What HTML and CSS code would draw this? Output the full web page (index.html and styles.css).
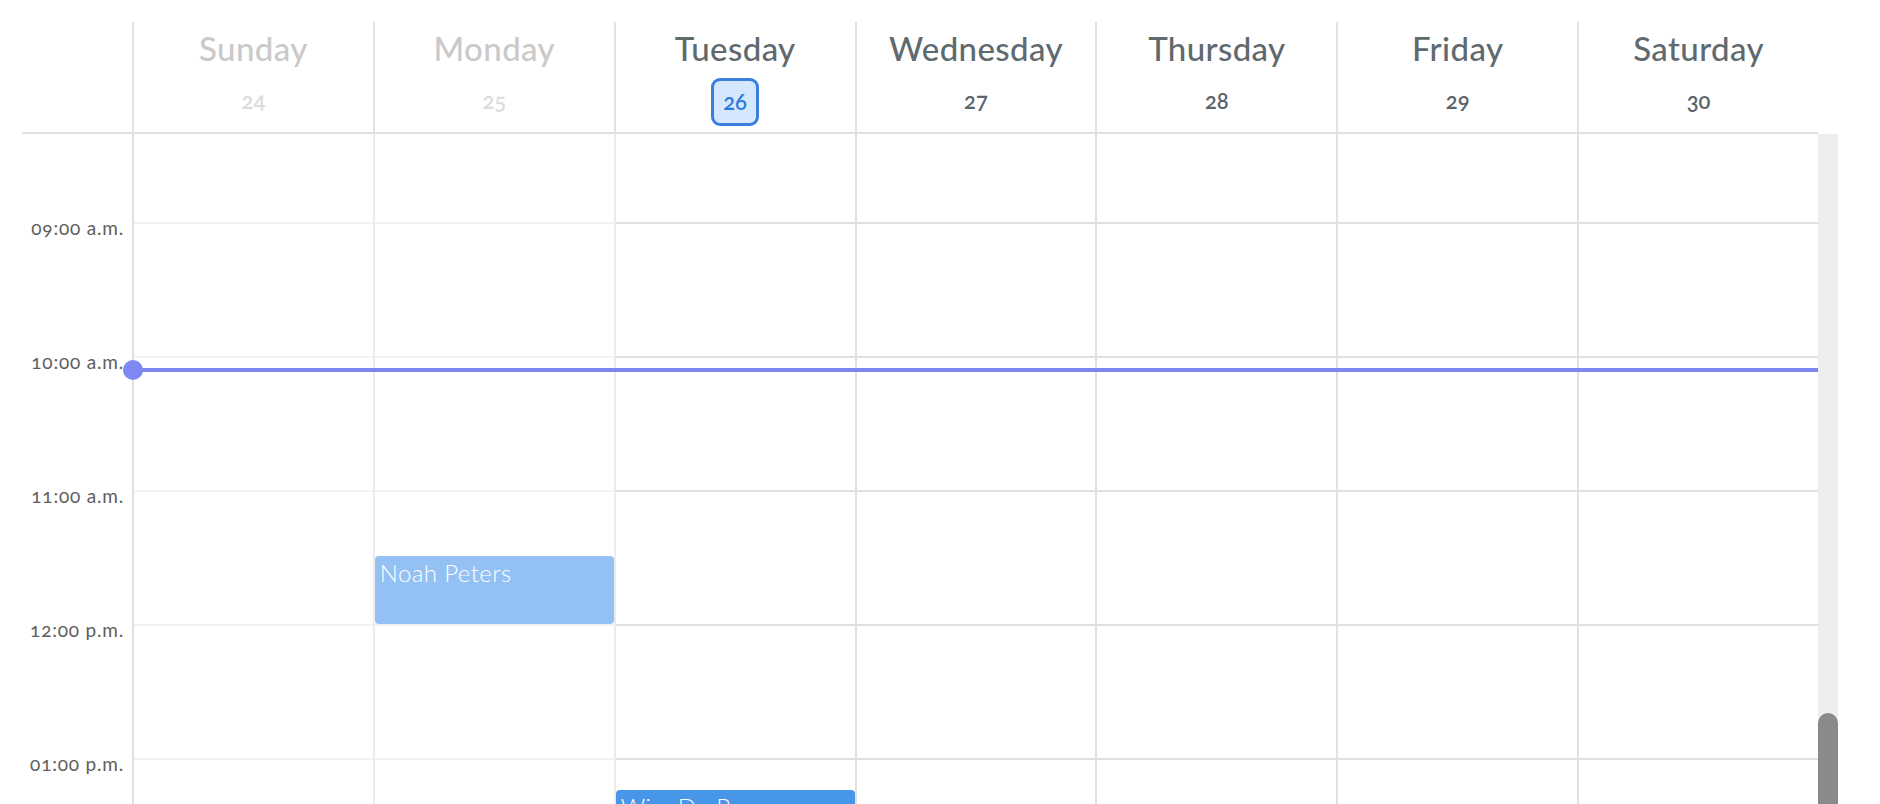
FILE: index.html
```html
<!DOCTYPE html>
<html lang="en">
<head>
    <meta charset="UTF-8">
    <meta name="viewport" content="width=device-width, initial-scale=1.0">
    <title>Week view</title>
    <link rel="stylesheet" href="styles.css">
</head>
<body>
    <div class="calendar">
        <div class="cal-head">
            <div class="corner"></div>
            <div class="day-head past"><div class="day-name">Sunday</div><div class="day-num">24</div></div>
            <div class="day-head past"><div class="day-name">Monday</div><div class="day-num">25</div></div>
            <div class="day-head today"><div class="day-name">Tuesday</div><div class="day-num">26</div></div>
            <div class="day-head"><div class="day-name">Wednesday</div><div class="day-num">27</div></div>
            <div class="day-head"><div class="day-name">Thursday</div><div class="day-num">28</div></div>
            <div class="day-head"><div class="day-name">Friday</div><div class="day-num">29</div></div>
            <div class="day-head"><div class="day-name">Saturday</div><div class="day-num">30</div></div>
        </div>

        <div class="cal-body">
            <div class="body-grid">
                <div class="hours">
                    <!-- 08:00 is scrolled away under the header -->
                    <div class="hour"></div>
                    <div class="hour"><span>09:00 a.m.</span></div>
                    <div class="hour"><span>10:00 a.m.</span></div>
                    <div class="hour"><span>11:00 a.m.</span></div>
                    <div class="hour"><span>12:00 p.m.</span></div>
                    <div class="hour"><span>01:00 p.m.</span></div>
                </div>

                <div class="days">
                    <div class="day past first">
                        <div class="slot"></div><div class="slot"></div><div class="slot"></div>
                        <div class="slot"></div><div class="slot"></div><div class="slot"></div>
                    </div>
                    <div class="day past">
                        <div class="slot"></div><div class="slot"></div><div class="slot"></div>
                        <div class="slot"></div><div class="slot"></div><div class="slot"></div>
                        <!-- 11:30 - 12:00 -->
                        <div class="event faded" style="top: 468px; height: 68px;">Noah Peters</div>
                    </div>
                    <div class="day today">
                        <div class="slot"></div><div class="slot"></div><div class="slot"></div>
                        <div class="slot"></div><div class="slot"></div><div class="slot"></div>
                        <!-- 13:15 - 14:15 -->
                        <div class="event" style="top: 702px; height: 134px;">Wim De Rouw</div>
                    </div>
                    <div class="day">
                        <div class="slot"></div><div class="slot"></div><div class="slot"></div>
                        <div class="slot"></div><div class="slot"></div><div class="slot"></div>
                    </div>
                    <div class="day">
                        <div class="slot"></div><div class="slot"></div><div class="slot"></div>
                        <div class="slot"></div><div class="slot"></div><div class="slot"></div>
                    </div>
                    <div class="day">
                        <div class="slot"></div><div class="slot"></div><div class="slot"></div>
                        <div class="slot"></div><div class="slot"></div><div class="slot"></div>
                    </div>
                    <div class="day">
                        <div class="slot"></div><div class="slot"></div><div class="slot"></div>
                        <div class="slot"></div><div class="slot"></div><div class="slot"></div>
                    </div>

                    <div class="now-line" style="top: 280px;"><span class="now-dot"></span></div>
                </div>
            </div>

            <div class="scrollbar"><div class="thumb"></div></div>
        </div>
    </div>
</body>
</html>
```

FILE: styles.css
```css
body {
    margin: 0;
    background: #fff;
    font-family: Lato, "Open Sans", sans-serif;
    font-variant-numeric: oldstyle-nums;
    color: #5f6a6f;
}
.calendar {
    padding: 22px 0 0 22px;
}

/* header */
.cal-head {
    display: grid;
    grid-template-columns: 110px repeat(7, 1fr);
    width: 1796px;
    border-bottom: 2px solid #e0e0e0;
}
.day-head {
    height: 110px;
    box-sizing: border-box;
    padding-top: 6px;
    border-left: 2px solid #e2e2e2;
    display: flex;
    flex-direction: column;
    align-items: center;
}
.day-name {
    font-size: 33px;
    line-height: 40px;
    font-weight: 500;
    letter-spacing: 0.4px;
    color: #5f6a6f;
}
.day-num {
    margin-top: 10px;
    width: 48px;
    height: 48px;
    box-sizing: border-box;
    border: 3px solid transparent;
    border-radius: 9px;
    padding-bottom: 4px;
    text-align: center;
    font-size: 22px;
    line-height: 40px;
    font-weight: 600;
    color: #5a646a;
}
.day-head.past .day-name {
    color: #c9c9c9;
}
.day-head.past .day-num {
    color: #dcdcdc;
}
.day-head.today .day-num {
    border-color: #3a7fdd;
    background: #d5e7fc;
    color: #2d7ae0;
    line-height: 42px;
}

/* body */
.cal-body {
    display: flex;
    align-items: flex-start;
    height: 670px;
    overflow: hidden;
}
.body-grid {
    width: 1796px;
    flex: none;
    display: grid;
    grid-template-columns: 110px 1fr;
    margin-top: -46px;
}
.hour {
    display: flow-root;
    height: 134px;
}
.hour span {
    display: block;
    margin-top: -5px;
    padding-right: 8px;
    text-align: right;
    font-size: 19px;
    line-height: 22px;
    letter-spacing: 0.8px;
    color: #5e5e5e;
}
.days {
    display: grid;
    grid-template-columns: repeat(7, 1fr);
    position: relative;
}
.day {
    position: relative;
    border-left: 2px solid #e0e0e0;
}
.day.past,
.day.today {
    border-left-color: #ececec;
}
.day.first {
    border-left-color: #e0e0e0;
}
.slot {
    height: 134px;
    box-sizing: border-box;
    border-top: 2px solid #e0e0e0;
}
.day.past .slot {
    border-top-color: #f3f3f3;
}

.event {
    position: absolute;
    left: 0;
    right: 0;
    box-sizing: border-box;
    padding: 3px 5px;
    border-radius: 4px;
    background: #4896ea;
    color: #fff;
    font-size: 24px;
    line-height: 28px;
    font-weight: 300;
    letter-spacing: 0.4px;
}
.event.faded {
    background: #93c1f4;
}

.now-line {
    position: absolute;
    left: 0;
    right: 0;
    height: 4px;
    background: #7b86f0;
}
.now-dot {
    position: absolute;
    left: -9px;
    top: -8px;
    width: 20px;
    height: 20px;
    border-radius: 50%;
    background: #7d88f3;
}

.scrollbar {
    width: 20px;
    height: 670px;
    flex: none;
    background: #ededed;
}
.thumb {
    margin-top: 579px;
    height: 140px;
    border-radius: 10px;
    background: #8a8a8a;
}
```
